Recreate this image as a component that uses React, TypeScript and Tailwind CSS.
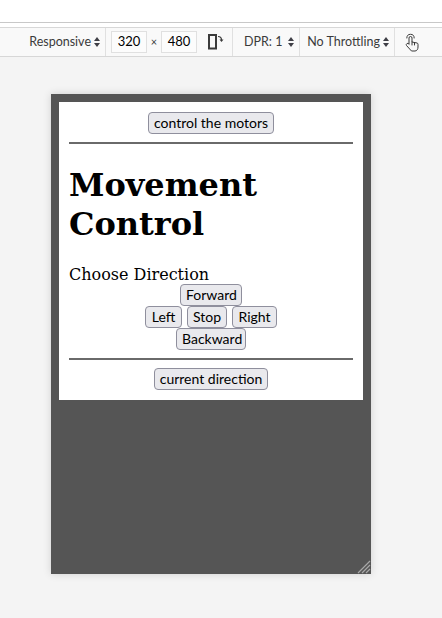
import React from 'react';

const Updown = () => (
    <svg width="6" height="10" viewBox="0 0 6 10" className="shrink-0">
        <path d="M3 0 L6 4 H0 Z M0 6 H6 L3 10 Z" fill="#3f3f46" />
    </svg>
);

const Btn = ({ children, className = '' }: { children: React.ReactNode; className?: string }) => (
    <button className={`h-[22px] px-[5px] rounded-[4px] border border-[#8f8f9d] bg-[#e9e9ed] text-[14px] leading-[20px] text-black whitespace-nowrap [font-family:'Lato',sans-serif] ${className}`}>
        {children}
    </button>
);

const Toolbar = () => (
    <div className="h-[30px] flex items-center border-y border-[#d7d7d7] bg-[#f9f9f9] text-[12.5px] text-[#3b3b3b] [font-family:'Lato',sans-serif]">
        <div className="w-[106px] h-full flex items-center justify-end gap-[3px] pr-[5px] border-r border-[#e0e0e0]">
            <span>Responsive</span>
            <Updown />
        </div>
        <div className="w-[127px] h-full flex items-center pl-[5px] border-r border-[#e0e0e0]">
            <div className="w-[36px] h-[22px] flex items-center justify-center border border-[#e0e0e0] bg-[#fcfcfc] text-[13px] text-black">320</div>
            <span className="w-[14px] text-center text-[11px]">×</span>
            <div className="w-[36px] h-[22px] flex items-center justify-center border border-[#e0e0e0] bg-[#fcfcfc] text-[13px] text-black">480</div>
            <svg width="16" height="16" viewBox="0 0 16 16" className="ml-[11px]" fill="none" stroke="#3b3b3b">
                <rect x="1" y="1" width="7" height="13.5" strokeWidth="2" />
                <path d="M10 2.5 C12.5 2.5 13.5 3.5 13.5 6" strokeWidth="1.2" />
                <path d="M11.5 5.5 H15.5 L13.5 8 Z" fill="#3b3b3b" stroke="none" />
            </svg>
        </div>
        <div className="w-[67px] h-full flex items-center justify-between pl-[11px] pr-[5px] border-r border-[#e0e0e0]">
            <span>DPR: 1</span>
            <Updown />
        </div>
        <div className="w-[95px] h-full flex items-center justify-end gap-[3px] pr-[5px] border-r border-[#e0e0e0]">
            <span className="whitespace-nowrap">No Throttling</span>
            <Updown />
        </div>
        <div className="flex-1 h-full flex items-center pl-[10px]">
            <svg width="14" height="19" viewBox="0 0 14 19" fill="none" stroke="#3b3b3b" strokeWidth="1" strokeLinejoin="round" strokeLinecap="round">
                <path d="M4 11 V5 a1.5 1.5 0 0 1 3 0 V9 L12 10 a1.3 1.3 0 0 1 1 1.3 V14 c0 2 -1 4 -3 4 H6.5 L1.5 12.5 a1.2 1.2 0 0 1 2.5 -1.5" />
                <path d="M7 9 V12 M9.5 9.5 V12" />
                <path d="M1.8 5 a3.7 3.7 0 0 1 7.4 0" />
            </svg>
        </div>
    </div>
);

export default function App() {
    return (
        <div className="w-[442px] h-[618px] overflow-hidden bg-[#f4f4f4] flex flex-col">
            <div className="h-[22px] bg-white shrink-0" />
            <div className="h-[5px] border-t border-[#c8c8c8] bg-white shrink-0" />
            <Toolbar />
            <div className="pt-[37px] pl-[51px]">
                <div className="relative w-[320px] h-[480px] bg-[#555555] p-2 shadow-[0_0_8px_rgba(0,0,0,0.15)]">
                    <div className="bg-white px-[10px] h-[298px] [font-family:'DejaVu_Serif',serif] text-black">
                        <div className="pt-[10px] flex justify-center">
                            <Btn>control the motors</Btn>
                        </div>
                        <hr className="mt-2 border-t-2 border-[#6a6a6a]" />
                        <h1 className="mt-[22px] text-[32px] leading-[39px] font-bold">Movement Control</h1>
                        <p className="mt-[21px] text-[16px] leading-[19px]">Choose Direction</p>
                        <div className="flex flex-col items-center">
                            <Btn className="w-[62px]">Forward</Btn>
                            <div className="flex gap-[5px]">
                                <Btn className="w-[37px]">Left</Btn>
                                <Btn className="w-[40px]">Stop</Btn>
                                <Btn className="w-[45px]">Right</Btn>
                            </div>
                            <Btn className="w-[70px]">Backward</Btn>
                        </div>
                        <hr className="mt-2 border-t-2 border-[#6a6a6a]" />
                        <div className="mt-2 flex justify-center">
                            <Btn>current direction</Btn>
                        </div>
                    </div>
                    <svg width="14" height="14" viewBox="0 0 14 14" className="absolute right-0 bottom-0" stroke="#a8a8a8" strokeWidth="1.2">
                        <path d="M1 13 L13 1 M5 13 L13 5 M9 13 L13 9" />
                    </svg>
                </div>
            </div>
        </div>
    );
}
